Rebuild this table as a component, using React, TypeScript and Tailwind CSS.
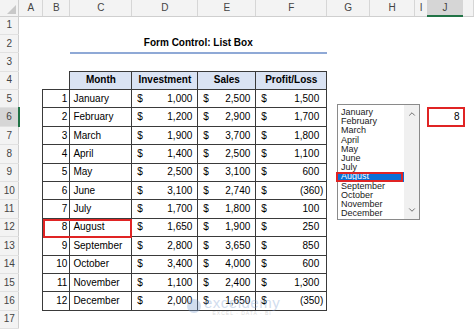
import React from 'react';
import { ChevronUp, ChevronDown } from 'lucide-react';

const cols = ['A', 'B', 'C', 'D', 'E', 'F', 'G', 'H', 'I', 'J', ''];
const colWidths = ['w-[24px]', 'w-[27px]', 'w-[62px]', 'w-[66px]', 'w-[58px]', 'w-[71px]', 'w-[43px]', 'w-[45px]', 'w-[13px]', 'w-[35px]', 'w-[11px]'];

const data = [
  ['January', '1,000', '2,500', '1,500'],
  ['February', '1,200', '2,900', '1,700'],
  ['March', '1,900', '3,700', '1,800'],
  ['April', '1,400', '2,500', '1,100'],
  ['May', '2,500', '3,100', '600'],
  ['June', '3,100', '2,740', '(360)'],
  ['July', '1,700', '1,800', '100'],
  ['August', '1,650', '1,900', '250'],
  ['September', '2,800', '3,650', '850'],
  ['October', '3,400', '4,000', '600'],
  ['November', '1,100', '2,400', '1,300'],
  ['December', '2,000', '1,650', '(350)'],
];

const months = data.map((d) => d[0]);

const line = 'border border-[#3a3a3a]';

function RowNum({ n }: { n: number }) {
  const sel = n === 6;
  return (
    <td
      className={`p-0 text-center text-[10px] text-[#444] border-r ${
        sel ? 'bg-[#d6d6d6] border-r-2 border-r-[#217346]' : 'bg-[#f3f3f3] border-r-[#cfcfcf]'
      } border-b border-b-[#e1e1e1]`}
    >
      {n}
    </td>
  );
}

function Money({ value, last }: { value: string; last?: boolean }) {
  const neg = value.startsWith('(');
  return (
    <td className={`p-0 ${line}`}>
      <div className={`flex justify-between pl-[5px] ${neg ? 'pr-[3px]' : last ? 'pr-[7px]' : 'pr-[5px]'}`}>
        <span>$</span>
        <span>{value}</span>
      </div>
    </td>
  );
}

function Blank({ count }: { count: number }) {
  return (
    <>
      {Array.from({ length: count }).map((_, i) => (
        <td key={i} className="p-0" />
      ))}
    </>
  );
}

function ListBox() {
  return (
    <div className="absolute left-[337px] top-[104px] w-[83px] h-[116px] border border-[#8a8a8a] bg-white flex">
      <div className="flex-1 pt-[3px] pl-[3px]">
        {months.map((m) => (
          <div
            key={m}
            className={`h-[9.2px] leading-[9.2px] text-[9px] ${
              m === 'August' ? 'bg-[#0a6fd6] text-white -ml-[3px] pl-[3px]' : 'text-[#1a1a1a]'
            }`}
          >
            {m}
          </div>
        ))}
      </div>
      <div className="w-[15px] bg-[#f0f0f0] flex flex-col justify-between items-center py-[4px]">
        <ChevronUp size={10} strokeWidth={2} className="text-[#555]" />
        <ChevronDown size={10} strokeWidth={2} className="text-[#555]" />
      </div>
    </div>
  );
}

export default function App() {
  return (
    <div className="relative w-[474px] h-[330px] overflow-hidden bg-white font-['Liberation_Sans',Arial,sans-serif] text-black">
      <table className="table-fixed border-collapse text-[10px] leading-none">
        <colgroup>
          <col className="w-[19px]" />
          {colWidths.map((w, i) => (
            <col key={i} className={w} />
          ))}
        </colgroup>
        <tbody>
          {/* column letters */}
          <tr className="h-[16px]">
            <td className="p-0 bg-[#f3f3f3] border-r border-b border-[#cfcfcf] relative">
              <div className="absolute right-[2px] bottom-[2px] w-0 h-0 border-l-[9px] border-l-transparent border-b-[9px] border-b-[#c8c8c8]" />
            </td>
            {cols.map((c, i) => (
              <td
                key={i}
                className={`p-0 text-center text-[10px] text-[#444] border-r border-r-[#d6d6d6] ${
                  c === 'J' ? 'bg-[#d6d6d6] border-b-2 border-b-[#217346]' : 'bg-[#f3f3f3] border-b border-b-[#cfcfcf]'
                }`}
              >
                {c}
              </td>
            ))}
          </tr>
          <tr className="h-[18.4px]">
            <RowNum n={1} />
            <Blank count={11} />
          </tr>
          <tr className="h-[18.4px]">
            <RowNum n={2} />
            <Blank count={2} />
            <td colSpan={4} className="p-0 text-center font-bold text-[10px] border-b-2 border-b-[#8fa9d6]">
              Form Control: List Box
            </td>
            <Blank count={5} />
          </tr>
          <tr className="h-[18.4px]">
            <RowNum n={3} />
            <Blank count={11} />
          </tr>
          <tr className="h-[18.4px]">
            <RowNum n={4} />
            <Blank count={2} />
            {['Month', 'Investment', 'Sales', 'Profit/Loss'].map((h) => (
              <td key={h} className={`p-0 text-center font-bold bg-[#dae3f3] ${line}`}>
                {h}
              </td>
            ))}
            <Blank count={5} />
          </tr>
          {data.map((row, i) => (
            <tr key={row[0]} className="h-[18.4px]">
              <RowNum n={i + 5} />
              <td className="p-0" />
              <td className={`p-0 text-right pr-[2px] ${line}`}>{i + 1}</td>
              <td className={`p-0 pl-[3px] ${line}`}>{row[0]}</td>
              <Money value={row[1]} />
              <Money value={row[2]} />
              <Money value={row[3]} last />
              <Blank count={3} />
              <td className="p-0 text-right pr-[3px]">{i === 1 ? '8' : ''}</td>
              <td className="p-0" />
            </tr>
          ))}
          <tr className="h-[18.4px]">
            <RowNum n={17} />
            <Blank count={11} />
          </tr>
        </tbody>
      </table>

      <ListBox />

      {/* highlight boxes */}
      <div className="absolute left-[427px] top-[107px] w-[38px] h-[20px] border-2 border-[#e02424]" />
      <div className="absolute left-[43px] top-[219px] w-[89px] h-[19px] border-2 border-[#e02424]" />
      <div className="absolute left-[336px] top-[172px] w-[67px] h-[10px] border-2 border-[#e02424]" />

      {/* watermark */}
      <div className="absolute left-[187px] top-[295px] flex items-center gap-[3px] opacity-35 pointer-events-none">
        <div className="w-[14px] h-[14px] rounded-full bg-[#7d9fd0]" />
        <div className="flex flex-col items-center">
          <span className="text-[15px] leading-[15px] text-[#7d9fd0] tracking-[0.5px]">exceldemy</span>
          <span className="text-[5px] leading-[6px] text-[#999] tracking-[1px]">EXCEL · DATA · BI</span>
        </div>
      </div>
    </div>
  );
}
